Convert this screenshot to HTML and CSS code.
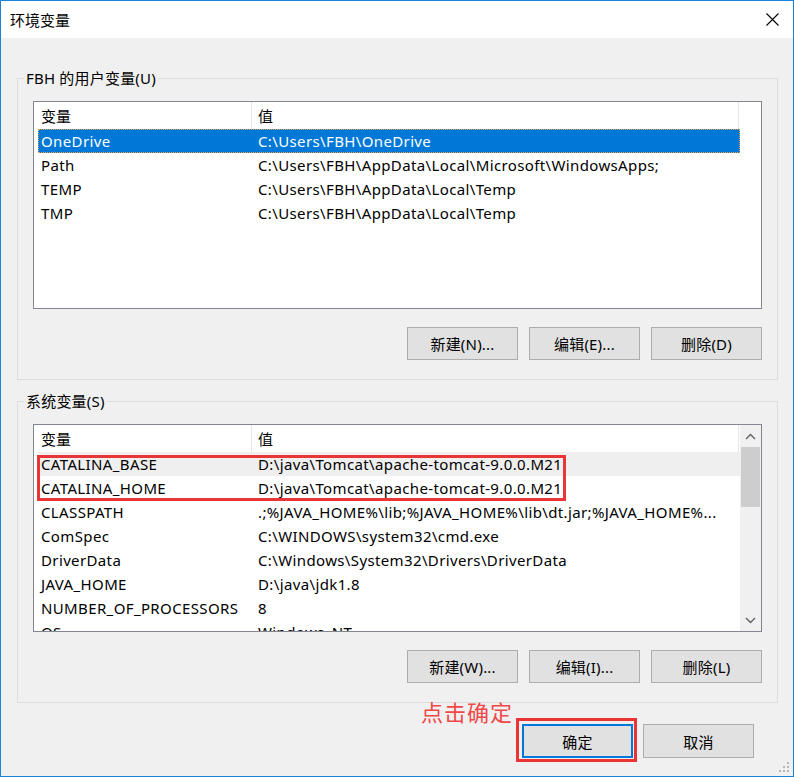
FILE: index.html
```html
<!DOCTYPE html>
<html lang="zh-CN">

<head>
    <meta charset="UTF-8">
    <title>环境变量</title>
    <link rel="stylesheet" href="styles.css">
</head>

<body>
<div class="window">
    <div class="titlebar">
        <span class="title">环境变量</span>
        <svg class="close" width="13" height="13" viewBox="0 0 13 13">
            <path d="M0.5 0.5 L12.5 12.5 M12.5 0.5 L0.5 12.5" stroke="#000" stroke-width="1.1" fill="none"/>
        </svg>
    </div>

    <!-- пользовательские переменные -->
    <div class="group">
        <div class="group-title">FBH 的用户变量(U)</div>
        <div class="list">
            <div class="list-main">
                <div class="list-head">
                    <div class="head-name">变量</div>
                    <div class="head-value">值</div>
                </div>
                <div class="row selected">
                    <div class="name">OneDrive</div>
                    <div class="value">C:\Users\FBH\OneDrive</div>
                </div>
                <div class="row">
                    <div class="name">Path</div>
                    <div class="value">C:\Users\FBH\AppData\Local\Microsoft\WindowsApps;</div>
                </div>
                <div class="row">
                    <div class="name">TEMP</div>
                    <div class="value">C:\Users\FBH\AppData\Local\Temp</div>
                </div>
                <div class="row">
                    <div class="name">TMP</div>
                    <div class="value">C:\Users\FBH\AppData\Local\Temp</div>
                </div>
            </div>
        </div>
        <div class="buttons">
            <button class="btn">新建(N)...</button>
            <button class="btn">编辑(E)...</button>
            <button class="btn">删除(D)</button>
        </div>
    </div>

    <!-- системные переменные -->
    <div class="group group-system">
        <div class="group-title">系统变量(S)</div>
        <div class="list">
            <div class="list-main">
                <div class="list-head">
                    <div class="head-name">变量</div>
                    <div class="head-value">值</div>
                </div>
                <div class="row hover">
                    <div class="name">CATALINA_BASE</div>
                    <div class="value">D:\java\Tomcat\apache-tomcat-9.0.0.M21</div>
                </div>
                <div class="row">
                    <div class="name">CATALINA_HOME</div>
                    <div class="value">D:\java\Tomcat\apache-tomcat-9.0.0.M21</div>
                </div>
                <div class="row">
                    <div class="name">CLASSPATH</div>
                    <div class="value">.;%JAVA_HOME%\lib;%JAVA_HOME%\lib\dt.jar;%JAVA_HOME%...</div>
                </div>
                <div class="row">
                    <div class="name">ComSpec</div>
                    <div class="value">C:\WINDOWS\system32\cmd.exe</div>
                </div>
                <div class="row">
                    <div class="name">DriverData</div>
                    <div class="value">C:\Windows\System32\Drivers\DriverData</div>
                </div>
                <div class="row">
                    <div class="name">JAVA_HOME</div>
                    <div class="value">D:\java\jdk1.8</div>
                </div>
                <div class="row">
                    <div class="name">NUMBER_OF_PROCESSORS</div>
                    <div class="value">8</div>
                </div>
                <div class="row">
                    <div class="name">OS</div>
                    <div class="value">Windows_NT</div>
                </div>
            </div>
            <div class="scrollbar">
                <div class="arrow">
                    <svg width="11" height="7" viewBox="0 0 11 7">
                        <path d="M1 6 L5.5 1.5 L10 6" stroke="#606060" stroke-width="1.4" fill="none"/>
                    </svg>
                </div>
                <div class="thumb"></div>
                <div class="track"></div>
                <div class="arrow">
                    <svg width="11" height="7" viewBox="0 0 11 7">
                        <path d="M1 1 L5.5 5.5 L10 1" stroke="#606060" stroke-width="1.4" fill="none"/>
                    </svg>
                </div>
            </div>
            <!-- красная рамка-пометка -->
            <div class="mark-rows"></div>
        </div>
        <div class="buttons">
            <button class="btn">新建(W)...</button>
            <button class="btn">编辑(I)...</button>
            <button class="btn">删除(L)</button>
        </div>
    </div>

    <div class="footer">
        <span class="mark-ok"><button class="btn btn-default">确定</button></span>
        <button class="btn btn-cancel">取消</button>
    </div>

    <div class="note">点击确定</div>

    <svg class="grip" width="12" height="12" viewBox="0 0 12 12">
        <rect x="9" y="1" width="2" height="2" fill="#b8b8b8"/>
        <rect x="5" y="5" width="2" height="2" fill="#b8b8b8"/>
        <rect x="9" y="5" width="2" height="2" fill="#b8b8b8"/>
        <rect x="1" y="9" width="2" height="2" fill="#b8b8b8"/>
        <rect x="5" y="9" width="2" height="2" fill="#b8b8b8"/>
        <rect x="9" y="9" width="2" height="2" fill="#b8b8b8"/>
    </svg>
</div>
</body>

</html>
```

FILE: styles.css
```css
body {
    margin: 0;
    font-family: "Noto Sans", "Noto Sans CJK SC", sans-serif;
    font-size: 15px;
    color: #000;
}

.window {
    position: relative;
    box-sizing: border-box;
    width: 794px;
    height: 777px;
    border: 1px solid #1883d7;
    background-color: #f0f0f0;
}

.titlebar {
    display: flex;
    justify-content: space-between;
    align-items: center;
    height: 37px;
    padding: 0 14px 0 9px;
    background-color: #fff;
}

.group {
    margin: 40px 15px 0 16px;
    padding: 0 15px 19px 15px;
    border: 1px solid #dcdcdc;
}

.group-system {
    margin-top: 21px;
}

.group-title {
    display: table;
    margin: -11px 0 0 -9px;
    padding: 0 2px;
    line-height: 20px;
    letter-spacing: 0.2px;
    background-color: #f0f0f0;
}

.list {
    position: relative;
    display: flex;
    box-sizing: border-box;
    height: 208px;
    margin-top: 13px;
    border: 1px solid #828790;
    background-color: #fff;
    overflow: hidden;
}

.list-main {
    width: 706px;
}

.list-head {
    display: flex;
    height: 27px;
    line-height: 29px;
}

.head-name {
    box-sizing: border-box;
    width: 218px;
    padding-left: 7px;
    border-right: 1px solid #e5e5e5;
}

.head-value {
    box-sizing: border-box;
    width: 487px;
    padding-left: 6px;
    border-right: 1px solid #e5e5e5;
}

.row {
    display: flex;
    box-sizing: border-box;
    width: 702px;
    height: 24px;
    margin-left: 4px;
    line-height: 24px;
    letter-spacing: 0.37px;
    white-space: nowrap;
}

.row.selected {
    background-color: #0078d7;
    color: #fff;
    outline: 1px dotted #e8a050;
    outline-offset: -1px;
}

.row.hover {
    background-color: #efefef;
}

.name {
    box-sizing: border-box;
    width: 220px;
    padding-left: 3px;
}

.value {
    overflow: hidden;
}

.scrollbar {
    display: flex;
    flex-direction: column;
    width: 21px;
    margin-left: auto;
    background-color: #f0f0f0;
}

.arrow {
    display: flex;
    justify-content: center;
    align-items: center;
    height: 22px;
}

.thumb {
    height: 60px;
    margin: 0 1px;
    background-color: #cdcdcd;
}

.track {
    flex: 1;
}

.mark-rows {
    position: absolute;
    left: 3px;
    top: 30px;
    width: 523px;
    height: 40px;
    border: 3px solid #e93535;
}

.buttons {
    display: flex;
    justify-content: flex-end;
    gap: 11px;
    margin-top: 18px;
}

.btn {
    box-sizing: border-box;
    width: 111px;
    height: 33px;
    padding: 0;
    border: 1px solid #adadad;
    background-color: #e1e1e1;
    font-family: "Noto Sans", "Noto Sans CJK SC", sans-serif;
    font-size: 15px;
    letter-spacing: 0.2px;
    color: #000;
}

.footer {
    display: flex;
    justify-content: flex-end;
    align-items: flex-start;
    margin-top: 15px;
    padding-right: 39px;
}

.mark-ok {
    display: block;
    padding: 3px 1px 1px 3px;
    border: 3px solid #e93535;
}

.btn-default {
    display: block;
    height: 34px;
    border: 2px solid #0078d7;
}

.btn-cancel {
    height: 34px;
    margin: 6px 0 0 6px;
}

.note {
    position: absolute;
    left: 420px;
    top: 697px;
    font-family: "Noto Sans CJK SC", sans-serif;
    font-size: 22px;
    line-height: 26px;
    letter-spacing: 1px;
    color: #f04848;
}

.grip {
    position: absolute;
    right: 3px;
    bottom: 3px;
}
```
